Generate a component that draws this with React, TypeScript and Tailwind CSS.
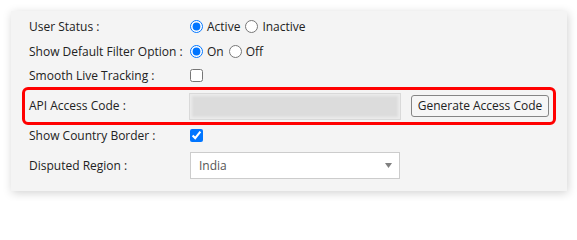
import React from "react";

const font = { fontFamily: '"Open Sans", "Noto Sans", sans-serif' };

function Radio({ checked }: { checked: boolean }) {
  return (
    <input
      type="radio"
      readOnly
      checked={checked}
      className="m-0 w-[13px] h-[13px] accent-[#0075ff] shrink-0"
    />
  );
}

export default function App() {
  return (
    <div
      className="w-[577px] h-[201px] bg-white pt-[11px] pl-[11px] text-[12px] text-[#222]"
      style={font}
    >
      <div className="w-[556px] h-[180px] bg-[#f4f4f4] shadow-[1px_2px_9px_rgba(0,0,0,0.18)] flex flex-col px-[11px] pt-[3px]">
        <div className="flex items-center h-[25px] pl-[7px]">
          <div className="w-[161px] shrink-0">User Status :</div>
          <div className="flex items-center">
            <Radio checked />
            <span className="ml-[4px]">Active</span>
            <span className="ml-[5px] flex items-center">
              <Radio checked={false} />
            </span>
            <span className="ml-[4px]">Inactive</span>
          </div>
        </div>
        <div className="flex items-center h-[25px] pl-[7px]">
          <div className="w-[161px] shrink-0">Show Default Filter Option :</div>
          <div className="flex items-center">
            <Radio checked />
            <span className="ml-[4px]">On</span>
            <span className="ml-[5px] flex items-center">
              <Radio checked={false} />
            </span>
            <span className="ml-[4px]">Off</span>
          </div>
        </div>
        <div className="flex items-center h-[23px] pl-[7px]">
          <div className="w-[161px] shrink-0">Smooth Live Tracking :</div>
          <input
            type="checkbox"
            readOnly
            className="m-0 w-[13px] h-[13px] accent-[#0075ff]"
          />
        </div>
        <div className="flex items-center h-[38px] border-[3px] border-[#ff0000] rounded-[6px] pl-[4px]">
          <div className="w-[160px] shrink-0">API Access Code :</div>
          <div className="w-[212px] h-[27px] border border-[#d9d9d9] bg-[#ececec] p-[2px] overflow-hidden">
            <div className="w-full h-full bg-[#dcdcdc] blur-[1px]" />
          </div>
          <button className="ml-[10px] w-[138px] h-[22px] border border-[#858585] rounded-[3px] bg-[#f6f6f6] text-[12px] text-[#222] leading-none flex items-center justify-center">
            Generate Access Code
          </button>
        </div>
        <div className="flex items-center h-[21px] pl-[7px]">
          <div className="w-[161px] shrink-0">Show Country Border :</div>
          <input
            type="checkbox"
            readOnly
            checked
            className="m-0 w-[13px] h-[13px] accent-[#0075ff]"
          />
        </div>
        <div className="flex items-center h-[27px] mt-[6px] pl-[7px]">
          <div className="w-[161px] shrink-0">Disputed Region :</div>
          <div className="w-[210px] h-[27px] border border-[#cccccc] bg-white flex items-center pl-[8px] pr-[7px] text-[#555]">
            <span className="flex-1">India</span>
            <svg width="7" height="5" viewBox="0 0 7 5">
              <path d="M0 0H7L3.5 5Z" fill="#808080" />
            </svg>
          </div>
        </div>
      </div>
    </div>
  );
}
